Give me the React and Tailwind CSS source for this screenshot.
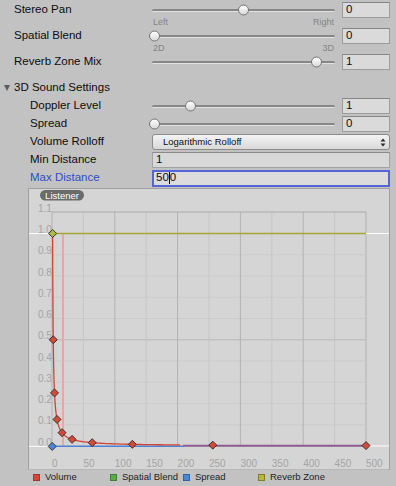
import React from 'react';

// graph mapping: distance 0..500 -> x 52..366, value 0..1.1 -> y 447..213
const X0 = 52;
const XS = 0.628;
const Y0 = 447;
const YS = 212.5;
const gx = (d) => X0 + d * XS;
const gy = (v) => Y0 - v * YS;

const Slider = ({ pos }) => (
  <div className="relative w-[183px] h-full flex items-center">
    <div className="w-full h-[3px] rounded-full bg-[#878787] border-b border-[#e2e2e2]" />
    <div
      className="absolute top-1/2 -translate-y-1/2 w-[11px] h-[11px] rounded-full border border-[#777777] bg-gradient-to-b from-white to-[#d9d9d9]"
      style={{ left: `${2.5 + pos * 178 - 5.5}px` }}
    />
  </div>
);

const NumField = ({ value }) => (
  <div className="w-[48px] h-[16px] bg-[#dadada] border border-[#9c9c9c] border-t-[#868686] pl-[3px] flex items-center text-[11.5px] leading-none">
    {value}
  </div>
);

const SliderRow = ({ label, pos, value, indent }) => (
  <div className={`flex items-center h-[16px] pr-[6px] ${indent ? 'pl-[30px]' : 'pl-[14px]'}`}>
    <div className={indent ? 'w-[122px]' : 'w-[138px]'}>{label}</div>
    <div className="flex items-center gap-[7px] h-full">
      <Slider pos={pos} />
      <NumField value={value} />
    </div>
  </div>
);

const SubLabels = ({ left, right }) => (
  <div className="h-[10px] pl-[153px] flex">
    <div className="w-[181px] flex justify-between text-[9px] leading-[8px] text-[#858585]">
      <span>{left}</span>
      <span>{right}</span>
    </div>
  </div>
);

const Diamond = ({ x, y, fill }) => (
  <path d={`M${x} ${y - 4} L${x + 4} ${y} L${x} ${y + 4} L${x - 4} ${y} Z`} fill={fill} stroke="#2e2a22" strokeWidth="0.9" />
);

const Graph = () => {
  const pts = [];
  for (let i = 0; i <= 160; i++) {
    const d = Math.pow(204, i / 160);
    pts.push(`${gx(d).toFixed(2)} ${gy(1 / d).toFixed(2)}`);
  }
  const curve = `M${gx(1)} ${gy(1)} L` + pts.join(' L');
  const keys = [2, 4, 8, 16, 32, 64, 128, 256];
  const xTicks = [0, 50, 100, 150, 200, 250, 300, 350, 400, 450, 500];
  const yTicks = [1.1, 1.0, 0.9, 0.8, 0.7, 0.6, 0.5, 0.4, 0.3, 0.2, 0.1, 0.0];
  const font = 'Liberation Sans, Arial, sans-serif';

  return (
    <svg width="360" height="280" viewBox="29 190 360 280" className="block">
      {/* minor horizontal grid */}
      {yTicks.slice(1).map((v) => (
        <line key={v} x1={X0} x2={gx(500)} y1={gy(v)} y2={gy(v)} stroke={v === 0.5 ? '#b9b9b9' : '#cbcbcb'} strokeWidth="1" />
      ))}
      {/* vertical grid */}
      {xTicks.map((d) => (
        <line key={d} x1={gx(d)} x2={gx(d)} y1={213} y2={Y0} stroke={d % 100 === 0 ? '#b2b2b2' : '#c6c6c6'} strokeWidth="1" />
      ))}
      <line x1={X0} x2={gx(500)} y1={213} y2={213} stroke="#aaaaaa" strokeWidth="1" />

      {/* axis labels */}
      {yTicks.map((v) => (
        <text key={v} x="38" y={gy(v) - 4} dominantBaseline="central" fontFamily={font} fontSize="10" fill="#a4a4a4">
          {v.toFixed(1)}
        </text>
      ))}
      {xTicks.map((d) => (
        <text key={d} x={gx(d)} y="464" dominantBaseline="central" fontFamily={font} fontSize="10" fill="#a4a4a4">
          {d}
        </text>
      ))}

      {/* white extensions outside the curve range */}
      <line x1="29" x2={X0} y1={gy(1)} y2={gy(1)} stroke="#ffffff" strokeWidth="1" />
      <line x1={gx(500)} x2="389" y1={gy(1)} y2={gy(1)} stroke="#ffffff" strokeWidth="1" />
      <line x1="29" x2={X0} y1={447.3} y2={447.3} stroke="#ffffff" strokeWidth="1" />
      <line x1={gx(500)} x2="389" y1={447} y2={447} stroke="#ffffff" strokeWidth="1" />

      {/* listener marker */}
      <line x1="63" x2="63" y1={gy(1)} y2={448} stroke="#eba5a2" strokeWidth="2" />

      {/* reverb zone */}
      <line x1={X0} x2={gx(500)} y1={gy(1)} y2={gy(1)} stroke="#a3a834" strokeWidth="1.5" />

      {/* spread */}
      <line x1={X0} x2="184" y1={447.3} y2={447.3} stroke="#4d83d6" strokeWidth="1.5" />

      {/* volume */}
      <path d={curve} fill="none" stroke="#cf4535" strokeWidth="1.3" />
      <line x1="183" x2={gx(500)} y1={446.8} y2={446.8} stroke="#8c5c8e" strokeWidth="2" />

      {keys.map((d) => (
        <Diamond key={d} x={gx(d)} y={gy(1 / d)} fill="#d5493b" />
      ))}
      <Diamond x={gx(500)} y={446.6} fill="#d5493b" />
      <Diamond x={52.2} y={447.4} fill="#4b86d8" />
      <Diamond x={52.6} y={gy(1)} fill="#b7b644" />

      {/* listener pill */}
      <rect x="40" y="191" width="44" height="10.5" rx="5.25" fill="#6b6b6b" />
      <text x="62" y="196.5" textAnchor="middle" dominantBaseline="central" fontFamily={font} fontSize="9.5" fill="#ffffff">
        Listener
      </text>
    </svg>
  );
};

const LegendItem = ({ color, border, label, width }) => (
  <div className={`flex items-center gap-[5px] ${width}`}>
    <div className={`w-[7px] h-[7px] border ${color} ${border}`} />
    <span>{label}</span>
  </div>
);

const App = () => {
  return (
    <div className="w-[396px] h-[486px] bg-[#c2c2c2] overflow-hidden text-[#0d0d0d] text-[11.5px] font-['Liberation_Sans',Arial,sans-serif]">
      <div className="pt-[2px]">
        <SliderRow label="Stereo Pan" pos={0.5} value="0" />
        <SubLabels left="Left" right="Right" />
        <SliderRow label="Spatial Blend" pos={0} value="0" />
        <SubLabels left="2D" right="3D" />
        <SliderRow label="Reverb Zone Mix" pos={0.909} value="1" />

        <div className="mt-[10px] h-[16px] flex items-center">
          <div className="w-[14px] flex justify-center">
            <div className="w-0 h-0 border-l-[3.5px] border-r-[3.5px] border-t-[6px] border-l-transparent border-r-transparent border-t-[#5c5c5c] ml-[-1px]" />
          </div>
          <span>3D Sound Settings</span>
        </div>

        <div className="mt-[2px] flex flex-col gap-[2px]">
          <SliderRow label="Doppler Level" pos={0.2} value="1" indent />
          <SliderRow label="Spread" pos={0} value="0" indent />

          <div className="flex items-center h-[16px] pl-[30px] pr-[6px]">
            <div className="w-[122px]">Volume Rolloff</div>
            <div className="flex-1 h-[16px] rounded-[3px] border border-[#8c8c8c] bg-gradient-to-b from-[#f3f3f3] to-[#d9d9d9] flex items-center justify-between pl-[10px] pr-[3px]">
              <span className="text-[9.5px] leading-none">Logarithmic Rolloff</span>
              <svg width="6" height="9" viewBox="0 0 6 9">
                <path d="M3 0.5 L5.5 3.5 L0.5 3.5 Z" fill="#2a2a2a" />
                <path d="M3 8.5 L5.5 5.5 L0.5 5.5 Z" fill="#2a2a2a" />
              </svg>
            </div>
          </div>

          <div className="flex items-center h-[16px] pl-[30px] pr-[6px]">
            <div className="w-[122px]">Min Distance</div>
            <div className="flex-1 h-[16px] bg-[#d8d8d8] border border-[#a2a2a2] border-t-[#8a8a8a] pl-[3px] flex items-center leading-none">
              1
            </div>
          </div>

          <div className="flex items-center h-[16px] pl-[30px] pr-[6px]">
            <div className="w-[122px] text-[#2f4ec4]">Max Distance</div>
            <div className="flex-1 h-[17px] bg-[#dcdcdc] border-2 border-[#5664d6] pl-[2px] flex items-center leading-none">
              <span>50</span>
              <span className="w-px h-[12px] bg-black" />
              <span>0</span>
            </div>
          </div>
        </div>

        <div className="mt-[2px] ml-[28px] mr-[6px] h-[282px] border border-[#a0a0a0] border-b-[#b8b8b8] bg-[#d5d5d5]">
          <Graph />
        </div>

        <div className="h-[15px] flex items-center pl-[33px] text-[9.5px] text-[#1e1e1e]">
          <LegendItem color="bg-[#d8483a]" border="border-[#9a3a30]" label="Volume" width="w-[77px]" />
          <LegendItem color="bg-[#58ad47]" border="border-[#3f8035]" label="Spatial Blend" width="w-[73px]" />
          <LegendItem color="bg-[#4c88d8]" border="border-[#35639e]" label="Spread" width="w-[75px]" />
          <LegendItem color="bg-[#b6b63e]" border="border-[#7f7f2a]" label="Reverb Zone" width="w-[90px]" />
        </div>
      </div>
    </div>
  );
};

export default App;
